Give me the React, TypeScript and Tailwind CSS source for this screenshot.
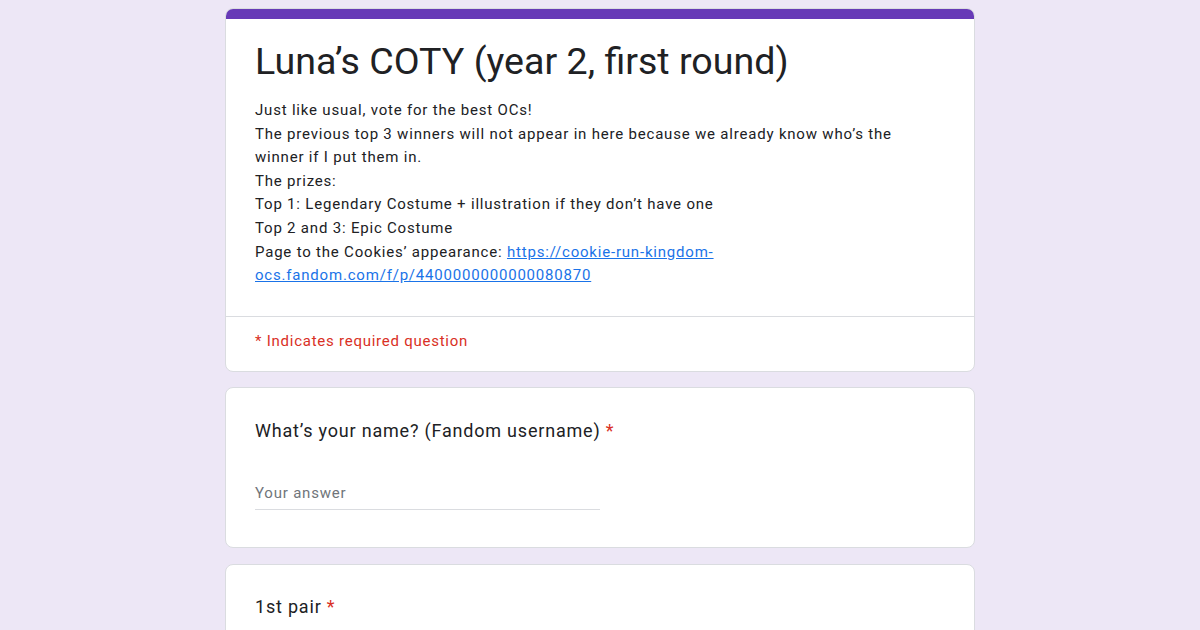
import React from "react";

export default function App() {
  const font = { fontFamily: "Roboto, 'Noto Sans', Arial, sans-serif" };
  return (
    <div className="w-[1200px] h-[630px] overflow-hidden bg-[#ede7f6]" style={font}>
      <div className="w-[750px] mx-auto pt-[8px] flex flex-col gap-[15px]">
        {/* Header card */}
        <div className="bg-white rounded-[8px] border border-[#dadce0] overflow-hidden">
          <div className="h-[10px] bg-[#673ab7]" />
          <div className="px-[29px] pt-[18px] pb-[28px]">
            <h1 className="text-[37.6px] leading-[48px] text-[#202124] tracking-[0px]">
              Luna’s COTY (year 2, first round)
            </h1>
            <div className="mt-[14px] text-[15px] leading-[23.6px] text-[#202124] tracking-[0.8px]">
              <div>Just like usual, vote for the best OCs!</div>
              <div>
                The previous top 3 winners will not appear in here because we already know who’s the
                <br />
                winner if I put them in.
              </div>
              <div>The prizes:</div>
              <div>Top 1: Legendary Costume + illustration if they don’t have one</div>
              <div>Top 2 and 3: Epic Costume</div>
              <div>
                Page to the Cookies’ appearance:{" "}
                <span className="text-[#1a73e8] underline">
                  https://cookie-run-kingdom-
                  <br />
                  ocs.fandom.com/f/p/4400000000000080870
                </span>
              </div>
            </div>
          </div>
          <div className="border-t border-[#dadce0] px-[29px] pt-[14px] pb-[20px]">
            <div className="text-[15px] leading-[20px] text-[#d93025] tracking-[0.75px]">
              * Indicates required question
            </div>
          </div>
        </div>

        {/* Name card */}
        <div className="bg-white rounded-[8px] border border-[#dadce0] px-[29px] pt-[31px] pb-[37px]">
          <div className="text-[18px] leading-[24px] text-[#202124] tracking-[0.8px]">
            What’s your name? (Fandom username) <span className="text-[#d93025]">*</span>
          </div>
          <div className="mt-[40px] w-[345px] border-b border-[#dadce0] pb-[6px] text-[15px] leading-[20px] text-[#70757a] tracking-[0.8px]">
            Your answer
          </div>
        </div>

        {/* 1st pair card */}
        <div className="mt-[1px] bg-white rounded-[8px] border border-[#dadce0] px-[29px] pt-[30px] h-[120px]">
          <div className="text-[18px] leading-[24px] text-[#202124] tracking-[0.8px]">
            1st pair <span className="text-[#d93025]">*</span>
          </div>
        </div>
      </div>
    </div>
  );
}
